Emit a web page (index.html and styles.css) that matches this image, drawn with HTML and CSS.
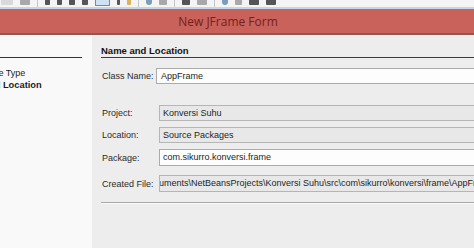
FILE: index.html
```html
<!DOCTYPE html>
<html lang="en">
<head>
  <meta charset="UTF-8">
  <title>New JFrame Form</title>
  <link rel="stylesheet" href="styles.css">
</head>
<body>

  <!-- Barra de herramientas (solo se ve el borde inferior) -->
  <div class="toolbar">
    <span class="tool tool-light" style="width:12px"></span>
    <span class="tool tool-grey" style="width:10px"></span>
    <span class="tool-sep"></span>
    <span class="tool tool-dark" style="width:5px"></span>
    <span class="tool tool-dark" style="width:5px"></span>
    <span class="tool tool-dark" style="width:6px"></span>
    <span class="tool tool-dark" style="width:6px"></span>
    <span class="tool tool-active"></span>
    <span class="tool tool-dark" style="width:3px"></span>
    <span class="tool tool-yellow"></span>
    <span class="tool-sep"></span>
    <span class="tool tool-round"></span>
    <span class="tool tool-grey" style="width:8px"></span>
    <span class="tool-sep"></span>
    <span class="tool tool-dark" style="width:8px"></span>
    <span class="tool tool-grey" style="width:10px"></span>
    <span class="tool-sep"></span>
    <span class="tool tool-round"></span>
    <span class="tool tool-grey" style="width:7px"></span>
    <span class="tool tool-dark" style="width:10px"></span>
    <span class="tool tool-dark" style="width:10px"></span>
  </div>

  <div class="titlebar">New JFrame Form</div>

  <div class="dialog">
    <!-- Pasos del asistente -->
    <div class="steps">
      <div class="steps-title"></div>
      <ol class="steps-list">
        <li>1.&nbsp; Choose File Type</li>
        <li class="current">2.&nbsp; Name and Location</li>
      </ol>
    </div>

    <div class="panel">
      <div class="panel-title">Name and Location</div>

      <div class="row row-class">
        <label class="row-label">Class Name:</label>
        <div class="field editable">AppFrame</div>
      </div>

      <div class="row row-project">
        <label class="row-label">Project:</label>
        <div class="field">Konversi Suhu</div>
      </div>

      <div class="row row-location">
        <label class="row-label">Location:</label>
        <div class="field">Source Packages</div>
      </div>

      <div class="row row-package">
        <label class="row-label">Package:</label>
        <div class="field editable">com.sikurro.konversi.frame</div>
      </div>

      <div class="row row-file">
        <label class="row-label">Created File:</label>
        <div class="field scrolled">uments\NetBeansProjects\Konversi Suhu\src\com\sikurro\konversi\frame\AppFrame.java</div>
      </div>

      <div class="separator"></div>
    </div>
  </div>

</body>
</html>
```

FILE: styles.css
```css
body {
  margin: 0;
  width: 474px;
  height: 248px;
  overflow: hidden;
  background-color: #ededed;
  font-family: "Liberation Sans", Arial, sans-serif;
  font-size: 9px;
  color: #1c1c1c;
}

/* barra de herramientas */
.toolbar {
  height: 7px;
  background-color: #f4f4f4;
  border-bottom: 2px solid #c4d6e4;
  display: flex;
  align-items: flex-start;
  gap: 7px;
  padding-left: 1px;
  overflow: hidden;
}

.tool {
  display: block;
  height: 5px;
  border-radius: 0 0 1px 1px;
}

.tool-light { background-color: #d9d9d9; }
.tool-grey { background-color: #a9a9a9; }
.tool-dark { background-color: #555; }

.tool-yellow {
  width: 4px;
  background-color: #d8b45a;
}

.tool-round {
  width: 6px;
  border-radius: 0 0 3px 3px;
  background-color: #7d9db8;
}

.tool-active {
  width: 15px;
  height: 6px;
  border: 1px solid #5b8fc4;
  border-top: none;
  background-color: #cfe2f4;
  box-sizing: border-box;
}

.tool-sep {
  width: 1px;
  height: 7px;
  background-color: #c8c8c8;
}

/* barra de titulo */
.titlebar {
  height: 24px;
  background-color: #c9625a;
  border-bottom: 2px solid #8f5a4a;
  color: #74211c;
  font-family: "Open Sans", "Liberation Sans", sans-serif;
  font-size: 12px;
  display: flex;
  align-items: center;
  justify-content: center;
  padding-right: 18px;
}

.dialog {
  display: flex;
  height: 213px;
}

/* pasos */
.steps {
  width: 92px;
  flex: none;
  background-color: #f9f9f9;
  overflow: hidden;
}

.steps-title {
  margin: 10px 10px 0 0;
  height: 12px;
  border-bottom: 1px solid #333;
}

.steps-list {
  list-style: none;
  margin: 9px 0 0 -57px;
  padding: 0;
  line-height: 12px;
  white-space: nowrap;
}

.steps-list .current {
  font-weight: bold;
  font-size: 9.3px;
}

/* panel derecho */
.panel {
  flex: 1;
  padding: 10px 0 0 10px;
  overflow: hidden;
}

.panel-title {
  margin-left: -1px;
  line-height: 12px;
  font-size: 9.5px;
  font-weight: bold;
  color: #111;
  border-bottom: 1px solid #3b3b3b;
}

.row {
  display: flex;
  align-items: center;
  margin-right: -20px;
}

.row-label {
  width: 57px;
  flex: none;
  color: #2a2a2a;
}

.row-class { margin-top: 10px; }
.row-class .row-label { width: 54px; }
.row-project { margin-top: 21px; }
.row-location { margin-top: 6px; }
.row-package { margin-top: 6px; }
.row-file { margin-top: 9px; }

.field {
  flex: 1;
  height: 16px;
  box-sizing: border-box;
  padding: 0 3px;
  line-height: 14px;
  border: 1px solid #b5b5b5;
  background-color: #e8e8e8;
  color: #1e1e1e;
  white-space: nowrap;
  overflow: hidden;
}

.field.editable {
  background-color: #fdfdfd;
  border-color: #ababab;
}

.row-class .field { padding-left: 4px; }
.row-package .field,
.row-file .field {
  height: 17px;
  line-height: 15px;
}

.field.scrolled {
  text-indent: -4px;
}

.separator {
  margin-top: 10px;
  margin-left: -1px;
  border-top: 1px solid #a9a9a9;
  border-bottom: 1px solid #f8f8f8;
}
```
